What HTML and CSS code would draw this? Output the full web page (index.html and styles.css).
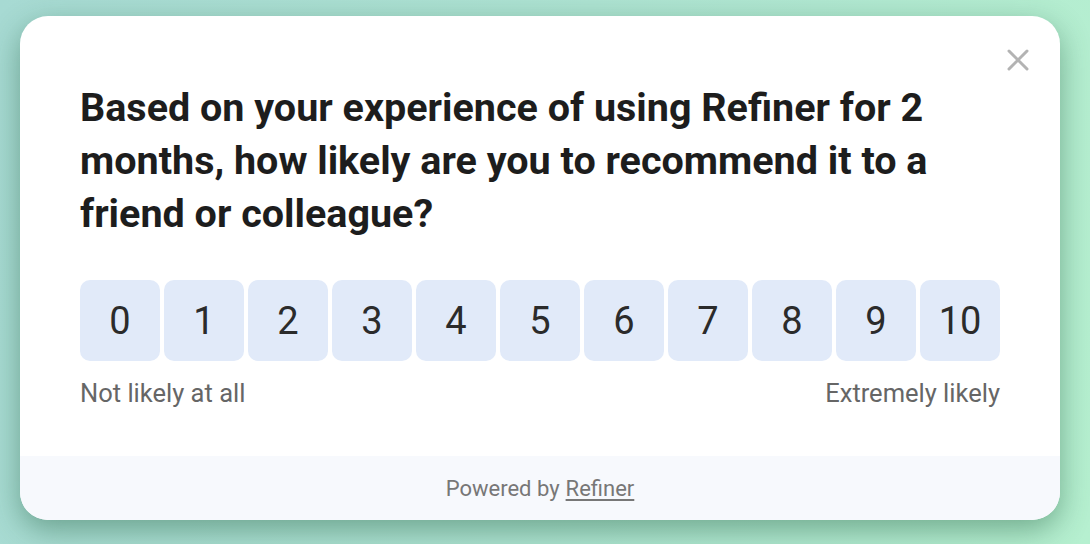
FILE: index.html
```html
<!DOCTYPE html>
<html lang="en">
<head>
<meta charset="utf-8">
<title>Refiner survey</title>
<link rel="stylesheet" href="styles.css">
</head>
<body>
<div class="stage">
  <div class="card">
    <button class="close" aria-label="Close">
      <svg width="22" height="22" viewBox="0 0 22 22"><path d="M2 2 L20 20 M20 2 L2 20" stroke="#b3b3b3" stroke-width="3" stroke-linecap="round" fill="none"/></svg>
    </button>
    <div class="main">
      <h1 class="question">Based on your experience of using Refiner for 2 months, how likely are you to recommend it to a friend or colleague?</h1>
      <div class="scale">
        <button class="opt">0</button>
        <button class="opt">1</button>
        <button class="opt">2</button>
        <button class="opt">3</button>
        <button class="opt">4</button>
        <button class="opt">5</button>
        <button class="opt">6</button>
        <button class="opt">7</button>
        <button class="opt">8</button>
        <button class="opt">9</button>
        <button class="opt">10</button>
      </div>
      <div class="labels">
        <span>Not likely at all</span>
        <span>Extremely likely</span>
      </div>
    </div>
    <div class="footer">Powered by <a href="#">Refiner</a></div>
  </div>
</div>
</body>
</html>
```
FILE: styles.css
```css
html, body {
  margin: 0;
  padding: 0;
  height: 100%;
}
body {
  background: linear-gradient(100deg, #a7dad3 0%, #aee3d2 50%, #b6f0d0 100%);
  font-family: Roboto, "Noto Sans", "Liberation Sans", sans-serif;
  overflow: hidden;
}
.stage {
  padding: 16px 30px 24px 20px;
}
.card {
  position: relative;
  width: 1040px;
  height: 504px;
  background: #ffffff;
  border-radius: 28px;
  box-shadow: 0 10px 30px rgba(30, 90, 60, 0.45);
  display: flex;
  flex-direction: column;
  overflow: hidden;
}
.close {
  position: absolute;
  top: 33px;
  right: 31px;
  width: 22px;
  height: 22px;
  padding: 0;
  border: 0;
  background: none;
  display: flex;
}
.main {
  flex: 1;
  padding: 65px 60px 0 60px;
}
.question {
  margin: 0;
  font-size: 39.5px;
  line-height: 53px;
  font-weight: 700;
  color: #1d1d1d;
  letter-spacing: 0;
}
.scale {
  display: grid;
  grid-template-columns: repeat(11, 1fr);
  gap: 4px;
  margin-top: 40px;
}
.opt {
  height: 81px;
  border: 0;
  border-radius: 10px;
  background: #e1eaf9;
  font-family: Roboto, "Noto Sans", sans-serif;
  font-size: 38px;
  color: #2b2b2b;
  padding: 0;
}
.labels {
  display: flex;
  justify-content: space-between;
  margin-top: 17px;
  font-size: 25.5px;
  line-height: 30px;
  color: #666666;
}
.footer {
  height: 64px;
  background: #f7f9fd;
  display: flex;
  align-items: center;
  justify-content: center;
  font-size: 22px;
  color: #777777;
  gap: 6px;
}
.footer a {
  color: #777777;
  text-decoration: underline;
  text-underline-offset: 3px;
}
```
